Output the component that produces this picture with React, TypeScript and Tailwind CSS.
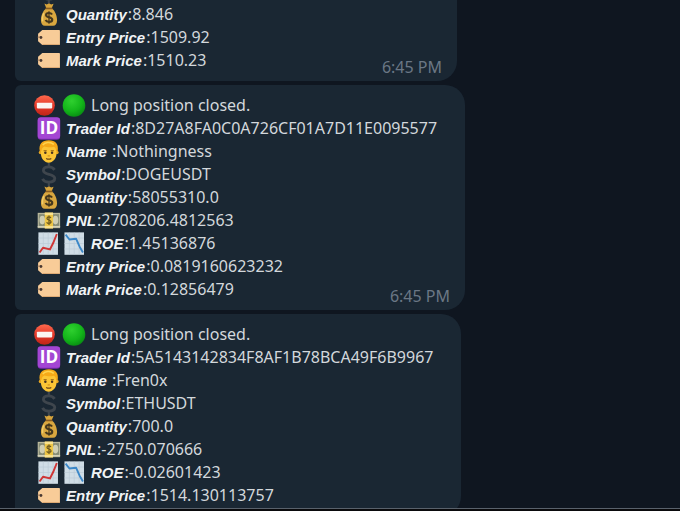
import type { ComponentType } from "react";
import clsx from "clsx";

interface IconProps {
  className?: string;
}

interface Field {
  label: string;
  value: string;
  icons: ComponentType<IconProps>[];
}

interface Message {
  id: string;
  title?: string;
  fields: Field[];
  time: string;
  className?: string;
}

function NoEntryIcon({ className }: IconProps) {
  return (
    <svg viewBox="0 0 24 24" className={className} aria-hidden="true">
      <defs>
        <linearGradient id="no-entry" x1="0" y1="0" x2="0" y2="1">
          <stop offset="0" stopColor="#ff6a4d" />
          <stop offset="0.5" stopColor="#e5392b" />
          <stop offset="1" stopColor="#bf2418" />
        </linearGradient>
      </defs>
      <circle cx="11.5" cy="12" r="10.8" fill="url(#no-entry)" />
      <rect x="3.5" y="9" width="16" height="6" rx="0.8" fill="#fbf4f2" />
    </svg>
  );
}

function GreenCircleIcon({ className }: IconProps) {
  return (
    <svg viewBox="0 0 24 24" className={className} aria-hidden="true">
      <defs>
        <radialGradient id="green-circle" cx="0.4" cy="0.3" r="0.75">
          <stop offset="0" stopColor="#2fd02f" />
          <stop offset="0.6" stopColor="#13b51a" />
          <stop offset="1" stopColor="#078a12" />
        </radialGradient>
      </defs>
      <circle cx="12" cy="12" r="11.8" fill="url(#green-circle)" />
    </svg>
  );
}

function IdIcon({ className }: IconProps) {
  return (
    <svg viewBox="0 0 24 24" className={className} aria-hidden="true">
      <rect x="0.2" y="0.8" width="23.4" height="23" rx="3.4" fill="#7f2bb0" />
      <rect x="0.2" y="0.2" width="23.4" height="22.6" rx="3.4" fill="#a346d3" />
      <text
        x="12"
        y="18"
        textAnchor="middle"
        fontSize="18"
        fontWeight="700"
        fill="#fff"
        className="font-['Open_Sans',sans-serif]"
      >
        ID
      </text>
    </svg>
  );
}

function ManIcon({ className }: IconProps) {
  return (
    <svg viewBox="0 0 24 24" className={className} aria-hidden="true">
      <circle cx="3.2" cy="13" r="1.9" fill="#e8a622" />
      <circle cx="20.2" cy="13" r="1.9" fill="#e8a622" />
      <path d="M3.6 9C3.6 4 7 1.6 11.7 1.6S19.8 4 19.8 9v5.4c0 5-3.8 9.300-8.100 9.300s-8.100-4.300-8.100-9.300z" fill="#fcc535" />
      <path d="M2.300 11.400C1.100 4.200 4.800.2 11.900.2c6.800 0 10.400 3.900 9.200 11.200l-1.600.2c-.2-2.400-1.100-4-2.600-4.600-3 .9-7.300.6-9.600-.3-2 .8-3.100 2.600-3.300 4.900z" fill="#f5a918" />
      <path d="M5.500 5.300C7.200 2.200 13.500 1.400 17 4.500" stroke="#ffd44d" strokeWidth="1.600" fill="none" />
      <path d="M6.400 11.200h3.200M13.800 11.200H17" stroke="#8a5a14" strokeWidth="1" />
      <circle cx="8.200" cy="13.400" r="1.300" fill="#4a3420" />
      <circle cx="15.200" cy="13.400" r="1.300" fill="#4a3420" />
      <path d="M10.500 16.600h2.400" stroke="#d28b17" strokeWidth="1.100" />
      <path d="M9 19.200c1.700 1 3.800 1 5.400 0" stroke="#6b4518" strokeWidth="1.200" fill="none" />
    </svg>
  );
}

function DollarIcon({ className }: IconProps) {
  return (
    <svg viewBox="0 0 24 24" className={className} aria-hidden="true">
      <path d="M11.800 0v4M11.800 20v4" stroke="#3f464d" strokeWidth="2.200" />
      <path
        d="M17.800 7.200C16.200 4.800 14.200 4 11.800 4 8.600 4 6.200 5.400 6.200 7.800c0 5.200 11.800 2.800 11.800 8.200 0 2.600-2.800 4-6.200 4-3 0-5.300-1.100-6.600-3.400"
        stroke="#3f464d"
        strokeWidth="3"
        fill="none"
      />
    </svg>
  );
}

function MoneyBagIcon({ className }: IconProps) {
  return (
    <svg viewBox="0 0 24 24" className={className} aria-hidden="true">
      <path d="M7.200.600l2.400.9L12 .3l2.300 1.200 2.500-.8-2 4.900H9.200z" fill="#d8a53c" />
      <path d="M9 5.800h6c3.300 2.200 5.400 7.400 5.400 12.200 0 3.600-1.500 5.800-4.200 5.800H7.800c-2.700 0-4.200-2.200-4.200-5.800C3.600 13.200 5.700 8 9 5.800z" fill="#d9a73f" />
      <path d="M6.600 10.500c-1.400 2.600-1.800 6-1.300 8.600" stroke="#f0cd6b" strokeWidth="1.500" fill="none" />
      <path d="M8.400 5.700h7.200" stroke="#8a5d22" strokeWidth="1.700" />
      <path d="M12 8.700v13" stroke="#44371d" strokeWidth="1.300" />
      <path
        d="M15.200 12c-.8-1.200-1.900-1.600-3.200-1.600-1.900 0-3.100.8-3.100 2.100 0 3.100 6.500 1.700 6.500 4.900 0 1.500-1.500 2.300-3.400 2.300-1.600 0-2.900-.6-3.600-1.900"
        stroke="#44371d"
        strokeWidth="2.200"
        fill="none"
      />
    </svg>
  );
}

function BanknoteIcon({ className }: IconProps) {
  return (
    <svg viewBox="0 0 24 24" className={className} aria-hidden="true">
      <rect x="0.200" y="4" width="23.400" height="16" fill="#b9b89c" />
      <rect x="1.400" y="5.400" width="21" height="12.200" fill="#848a74" />
      <ellipse cx="5" cy="11.600" rx="2.900" ry="4.500" fill="#cfceb4" />
      <ellipse cx="18.800" cy="11.600" rx="2.900" ry="4.500" fill="#cfceb4" />
      <path d="M.2 18.400h23.400" stroke="#d3d1ba" strokeWidth="1.300" />
      <rect x="7.600" y="3.800" width="8.600" height="16.400" fill="#eec748" />
      <rect x="7.600" y="3.800" width="8.600" height="2.400" fill="#fae391" />
      <rect x="7.600" y="17.800" width="8.600" height="2.400" fill="#fae391" />
      <path
        d="M14 9.400c-.5-.8-1.200-1.100-2.100-1.100-1.200 0-2 .6-2 1.500 0 2.100 4.200 1.300 4.200 3.600 0 1.100-1 1.700-2.200 1.700-1 0-1.900-.4-2.300-1.300M12 6.900v9.700"
        stroke="#6e5a20"
        strokeWidth="1.300"
        fill="none"
      />
    </svg>
  );
}

function ChartUpIcon({ className }: IconProps) {
  return (
    <svg viewBox="0 0 22 24" className={className} aria-hidden="true">
      <rect x="1" y="0.400" width="20.400" height="23.400" fill="#d0dde6" />
      <path d="M1 6.300h20.400M1 12h20.400M1 17.700h20.400M6.100.6v22.800M11.200.6v22.800M16.300.6v22.800" stroke="#bccbd6" strokeWidth="0.700" />
      <path d="M2.200 21.400l3.600-5 7.200 1.800 3.400-6.700 3.800-9.400" stroke="#cf3535" strokeWidth="2" fill="none" strokeLinejoin="round" />
    </svg>
  );
}

function ChartDownIcon({ className }: IconProps) {
  return (
    <svg viewBox="0 0 22 24" className={className} aria-hidden="true">
      <rect x="0" y="0.400" width="20.400" height="23.400" fill="#d0dde6" />
      <path d="M0 6.300h20.400M0 12h20.400M0 17.700h20.400M5.100.6v22.800M10.200.6v22.800M15.300.6v22.800" stroke="#bccbd6" strokeWidth="0.700" />
      <path d="M1.200 2.800l4 5 7-.7 3.600 8.200 3.500 6" stroke="#3b87c8" strokeWidth="2" fill="none" strokeLinejoin="round" />
    </svg>
  );
}

function TagIcon({ className }: IconProps) {
  return (
    <svg viewBox="0 0 24 24" className={className} aria-hidden="true">
      <path d="M5 4.200h17.600a.8.800 0 0 1 .8.800v14a.8.800 0 0 1-.8.800H5L.600 16V8z" fill="#f8cc98" />
      <path d="M5 19.300h18" stroke="#dda873" strokeWidth="1" />
      <circle cx="3.600" cy="12" r="1.500" fill="#4a3932" />
      <path d="M0 11.600h2.600" stroke="#8f6b50" strokeWidth="0.900" />
    </svg>
  );
}

const messages: Message[] = [
  {
    id: "first",
    fields: [
      { label: "Symbol", value: "ETHUSDT", icons: [DollarIcon] },
      { label: "Quantity", value: "8.846", icons: [MoneyBagIcon] },
      { label: "Entry Price", value: "1509.92", icons: [TagIcon] },
      { label: "Mark Price", value: "1510.23", icons: [TagIcon] },
    ],
    time: "6:45 PM",
    className: "w-[442px]",
  },
  {
    id: "doge",
    title: "Long position closed.",
    fields: [
      { label: "Trader Id", value: "8D27A8FA0C0A726CF01A7D11E0095577", icons: [IdIcon] },
      { label: "Name ", value: "Nothingness", icons: [ManIcon] },
      { label: "Symbol", value: "DOGEUSDT", icons: [DollarIcon] },
      { label: "Quantity", value: "58055310.0", icons: [MoneyBagIcon] },
      { label: "PNL", value: "2708206.4812563", icons: [BanknoteIcon] },
      { label: "ROE", value: "1.45136876", icons: [ChartUpIcon, ChartDownIcon] },
      { label: "Entry Price", value: "0.0819160623232", icons: [TagIcon] },
      { label: "Mark Price", value: "0.12856479", icons: [TagIcon] },
    ],
    time: "6:45 PM",
    className: "w-[450px]",
  },
  {
    id: "eth",
    title: "Long position closed.",
    fields: [
      { label: "Trader Id", value: "5A5143142834F8AF1B78BCA49F6B9967", icons: [IdIcon] },
      { label: "Name ", value: "Fren0x", icons: [ManIcon] },
      { label: "Symbol", value: "ETHUSDT", icons: [DollarIcon] },
      { label: "Quantity", value: "700.0", icons: [MoneyBagIcon] },
      { label: "PNL", value: "-2750.070666", icons: [BanknoteIcon] },
      { label: "ROE", value: "-0.02601423", icons: [ChartUpIcon, ChartDownIcon] },
      { label: "Entry Price", value: "1514.130113757", icons: [TagIcon] },
    ],
    time: "",
    className: "w-[446px]",
  },
];

function FieldRow({ field }: { field: Field }) {
  const paired = field.icons.length > 1;

  return (
    <div className="flex h-[23px] items-center gap-[5px] pl-1">
      {field.icons.map((Icon, index) => (
        <Icon key={index} className={clsx("h-[23px] shrink-0", paired ? "w-[22px]" : "w-6")} />
      ))}
      <p className="whitespace-pre">
        <span className="pr-px font-['Liberation_Sans',sans-serif] text-[15px] font-bold italic text-[#f1f4f6]">
          {field.label}
        </span>
        :{field.value}
      </p>
    </div>
  );
}

function MessageBubble({ message }: { message: Message }) {
  return (
    <article
      className={clsx(
        "relative max-w-full rounded-l-md rounded-r-[20px] bg-[#1a2733] px-[18px] py-[9px] leading-[23px]",
        message.className,
      )}
    >
      {message.title ? (
        <div className="flex h-[23px] items-center gap-[5px]">
          <NoEntryIcon className="h-[23px] w-6 shrink-0" />
          <GreenCircleIcon className="h-[23px] w-6 shrink-0" />
          <p>{message.title}</p>
        </div>
      ) : null}
      {message.fields.map((field) => (
        <FieldRow key={field.label} field={field} />
      ))}
      {message.time ? (
        <time className="absolute right-[15px] bottom-0.5 text-[#6b7785]">{message.time}</time>
      ) : null}
    </article>
  );
}

export default function App() {
  return (
    <div className="flex h-screen flex-col overflow-hidden bg-[#0f1620] font-['Noto_Sans',sans-serif] text-base text-[#d3d8dc]">
      <main className="min-h-0 flex-1 overflow-hidden">
        <div className="-mt-[29px] flex flex-col items-start gap-1 pl-[15px]">
          {messages.map((message) => (
            <MessageBubble key={message.id} message={message} />
          ))}
        </div>
      </main>
      <footer className="h-[3px] border-t border-[#59616b] bg-[#0a0a0c]" />
    </div>
  );
}
